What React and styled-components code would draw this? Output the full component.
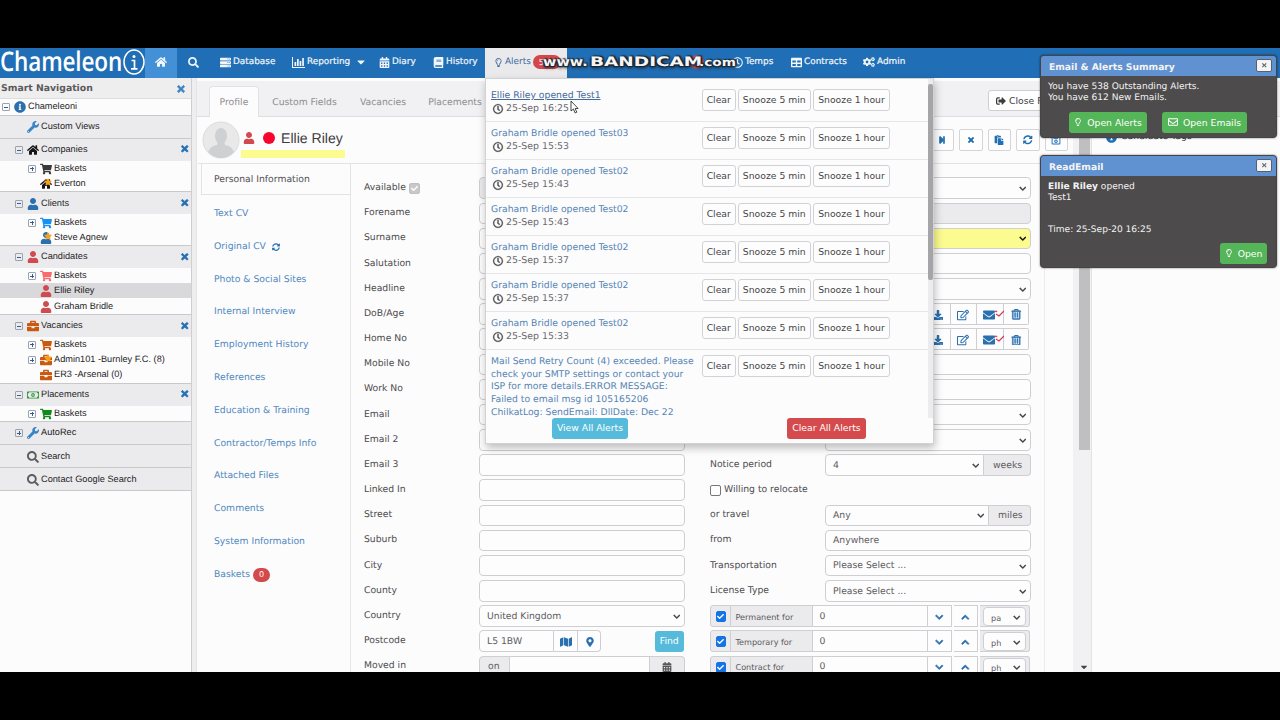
import React from "react";
import styled, { createGlobalStyle, css } from "styled-components";
import {
  FaHome, FaSearch, FaServer, FaCaretDown, FaCalendarAlt, FaBook, FaRegLightbulb, FaRegClock,
  FaTable, FaCogs, FaInfoCircle, FaWrench, FaShoppingCart, FaUser, FaBriefcase, FaRegMoneyBillAlt, FaStar,
  FaStepForward, FaTimes, FaPaste, FaRegSave, FaSignOutAlt, FaDownload, FaRegEdit, FaEnvelope,
  FaRegTrashAlt, FaMap, FaMapMarkerAlt, FaChevronDown, FaChevronUp, FaRegEnvelope, FaCheck, FaSyncAlt,
} from "react-icons/fa";

const Global = createGlobalStyle`
  * { box-sizing: border-box; }
  body { margin: 0; background: #000; overflow: hidden; }
`;
const verdana = `"DejaVu Sans", Verdana, sans-serif`;
const arial = `"Liberation Sans", Arial, sans-serif`;

const Page = styled.div`
  width: 1280px; height: 720px; padding: 48px 0; background: #000; overflow: hidden;
  font: 9.25px/12px ${verdana}; color: #4b4b4d; text-rendering: geometricPrecision; white-space: nowrap;
`;
const Frame = styled.div`
  position: relative; height: 624px; overflow: hidden; background: #fdfcfd; display: flex; flex-direction: column;
`;
const heavy = css`svg { stroke: currentColor; stroke-width: 45; overflow: visible; }`;

/* ---- top bar ---- */
const TopBar = styled.header`
  flex: none; height: 30px; background: #206eb5; color: #f1f6fb; display: flex; font-size: 8.9px;
`;
const Logo = styled.div`width: 145px; display: flex; align-items: center; color: #fff;`;
const LogoText = styled.span`
  flex: none; width: 121px; font: 600 27px/26px "Open Sans", sans-serif; letter-spacing: -0.2px;
  transform: translateY(-2px) scaleX(0.835); transform-origin: 0 50%;
`;
const LogoMark = styled.svg`flex: none; width: 24px; height: 28px; margin-left: 1px;`;
const MenuItem = styled.div`
  flex: none; width: ${(p) => p.$w}px; padding-left: ${(p) => p.$pl}px; display: flex; align-items: center; gap: 2px;
  padding-bottom: 2px; background: ${(p) => p.$bg || "transparent"}; color: ${(p) => p.$color || "inherit"};
  -webkit-text-stroke: ${(p) => (p.$color ? 0 : 0.2)}px;
  svg { font-size: ${(p) => p.$icon || 11}px; flex: none; }
`;
const Pill = styled.span`
  background: #d3474b; color: #fff; border-radius: 8px; height: 14px; width: ${(p) => p.$w || 18}px;
  display: inline-flex; align-items: center; padding-left: ${(p) => p.$pl || 6}px; font-size: 8.4px;
`;

const Body = styled.div`flex: 1; display: flex; min-height: 0;`;

/* ---- sidebar ---- */
const Side = styled.aside`
  flex: none; width: 192px; border-right: 1px solid #cfced1; background: #fdfcfd; font: 9.2px/12px ${arial}; color: #1d1d1f;
`;
const SideTitle = styled.div`
  height: 21px; background: #efeeef; display: flex; align-items: center; justify-content: space-between;
  padding: 2px 5px 0 1px; font: bold 9.3px/12px ${verdana}; color: #5a5a5d; border-bottom: 1px solid #dddcde;
  ${heavy}
  svg { color: #3d83c4; font-size: 10px; }
`;
const TreeRow = styled.div`
  display: flex; align-items: center; position: relative;
  height: ${(p) => (p.$kind === "group" ? 23.1 : p.$kind === "root" ? 15.6 : 15.25)}px;
  padding-left: ${(p) => (p.$kind === "group" ? 15 : p.$kind === "root" ? 2 : 28)}px;
  padding-right: 2px;
  padding-bottom: 1px;
  background: ${(p) => (p.$kind === "group" ? "#ebeaec" : "transparent")};
  border-top: ${(p) => (p.$kind === "group" ? "1px solid #c9c8cb" : "0")};
  ${(p) => p.$sel && css`background: #d9d8da;`}
  > b { margin-left: auto; color: #236fb2; display: flex; font-size: 9.5px; ${heavy} }
`;
const TreeEnd = styled.div`border-top: 1px solid #c9c8cb;`;
const Toggle = styled.span`
  width: 8px; height: 8px; margin-right: 3px; flex: none; border: 1px solid ${(p) => (p.$none ? "transparent" : "#9aa3b0")};
  border-radius: 1px; display: flex; align-items: center; justify-content: center; position: relative; top: 1px;
  &::before { content: ""; width: 4px; height: 1px; background: ${(p) => (p.$none ? "transparent" : "#3b5c8c")}; }
  &::after {
    content: ""; position: absolute; width: 1px; height: 4px; background: ${(p) => (p.$plus ? "#3b5c8c" : "transparent")};
  }
`;
const TreeIcon = styled.span`
  width: 13px; margin-right: 2px; display: flex; justify-content: center; color: ${(p) => p.$c}; position: relative; top: 1px;
  svg { font-size: 12px; }
  i { position: absolute; right: 0; top: 0; display: flex; color: #f5a01c; }
  i svg { font-size: 8px; }
`;

/* ---- main ---- */
const Main = styled.main`flex: none; width: 877px; margin-left: 4px; display: flex; flex-direction: column;
  border-left: 1px solid #e4e3e6; box-shadow: -4px 0 0 #eeedef;`;
const Tabs = styled.nav`
  flex: none; height: 36px; margin-top: 3px; background: #f1f0f2; border-bottom: 1px solid #dedde0; display: flex;
  align-items: flex-end; padding-left: 12px; color: #8e8d91; position: relative;
`;
const Tab = styled.div`
  height: ${(p) => (p.$on ? 31 : 30)}px; width: ${(p) => p.$w}px; padding-top: 11px; text-align: center;
  margin-bottom: ${(p) => (p.$on ? -1 : 0)}px;
  ${(p) => p.$on && css`background: #fdfcfd; border: 1px solid #e2e1e4; border-bottom: 0; border-radius: 4px 4px 0 0; padding-top: 10px;`}
`;
const CloseButton = styled.button`
  margin: 0 0 5px auto; height: 21px; width: 85px; border: 1px solid #cfced2; border-radius: 3px; background: #fefefe;
  font: inherit; color: #3c3c3e; display: flex; align-items: center; gap: 3px; padding: 0 7px; svg { font-size: 10px; }
`;
const NameRow = styled.div`
  flex: none; height: 47px; border-bottom: 1px solid #e3e2e5; display: flex; align-items: center; padding-left: 4px; margin-left: 1px;
`;
const Avatar = styled.svg`width: 38px; height: 38px; flex: none;`;
const NameTag = styled.div`
  width: 104px; height: 37px; margin: -1px 0 0 1px; border-bottom: 8px solid #fbfb90; display: flex; align-items: center;
  padding: 4px 0 0 2px; font: 14.1px/18px ${arial}; color: #3d3d40;
  svg { color: #d24a4e; font-size: 12px; }
`;
const Dot = styled.span`width: 12px; height: 12px; border-radius: 50%; background: #f6052d; margin: 0 6px 0 8px;`;
const Tools = styled.div`margin-left: auto; padding-right: 5px; display: flex; gap: 5px;`;
const Tool = styled.button`
  width: 23.5px; height: 22px; padding: 0; border: 1px solid #d5d4d8; border-radius: 2px; background: #fefefe; color: #2170b3;
  display: flex; align-items: center; justify-content: center; font-size: ${(p) => p.$s || 10}px;
  ${(p) => p.$heavy && heavy}
`;
const Columns = styled.div`flex: 1; display: flex; min-height: 0;`;
const Sections = styled.div`
  flex: none; width: 154px; border-right: 1px solid #e6e5e8; padding-left: 4px; color: #4f88bd;
`;
const Section = styled.div`
  height: 32.8px; padding: 2px 0 0 13px; display: flex; align-items: center; gap: 6px;
  svg { color: #236fb2; font-size: 8px; }
  ${(p) => p.$on && css`
    height: 31px; margin: 0 -1px 1.6px 0; border: 1px solid #e3e2e5; border-top: 0; color: #505053; background: #fdfcfd;
    padding: 2px 0 0 12px;
  `}
`;
const Count = styled.span`
  background: #d24a4b; color: #fff; height: 13.5px; width: 17px; margin-left: -3px; border-radius: 7px; font-size: 8px; display: flex;
  align-items: center; justify-content: center;
`;
const Form = styled.div`
  flex: none; width: 694px; padding: 11.5px 0 0 13px; border-right: 1px solid #ececee; display: flex; gap: 25px;
  overflow: hidden;
`;
const FormColumn = styled.div`width: 321px;`;
const Row = styled.div`height: 25.18px; display: flex; align-items: center;`;
const Label = styled.label`
  flex: none; width: 115px; display: flex; align-items: center; gap: 3px;
`;
const Box = styled.div`
  width: ${(p) => (p.$w ? p.$w + "px" : "auto")}; flex: ${(p) => (p.$w ? "none" : 1)}; height: ${(p) => p.$h || 21.5}px;
  border: 1px solid #cfced2; border-radius: ${(p) => p.$r || "4px"}; background: ${(p) => p.$bg || "#fefdfe"};
  padding: 1.5px ${(p) => p.$pr || 4}px 0 ${(p) => p.$pl || 7}px; display: flex; align-items: center; justify-content: space-between;
  margin-right: ${(p) => p.$mr || 0}px; color: ${(p) => p.$color || "#5c5c60"};
  font-size: ${(p) => p.$fs || 9.25}px;
  & + & { border-left-width: ${(p) => (p.$keep ? 1 : 0)}px; }
  svg { color: ${(p) => p.$ic || "#39393b"}; flex: none; }
  ${(p) => p.$heavy && heavy}
`;
const Check = styled.span`
  width: 11px; height: 11px; border-radius: 2px; border: 1px solid ${(p) => p.$line}; background: ${(p) => p.$bg};
  color: #fff; display: flex; align-items: center; justify-content: center; font-size: 7px; svg { color: #fff !important; }
`;
const Find = styled.button`
  margin-left: auto; width: 29.5px; height: 21px; padding: 0; border: 0; border-radius: 3px; background: #56bbdb; color: #fff; font: inherit;
  margin-right: 1px;
`;

const ScrollTrack = styled.div`
  flex: none; width: 18px; background: #f1f0f2; display: flex; flex-direction: column; align-items: center;
  justify-content: space-between; padding-left: 4px;
`;
const ScrollThumb = styled.div`width: 11px; height: 372px; background: #bfbec1;`;
const Rail = styled.section`flex: 1; border-left: 1px solid #e3e2e5; color: #333;`;
const RailBar = styled.div`height: 36px; margin-top: 3px; background: #f1f0f2; border-bottom: 1px solid #dedde0;`;
const RailTitle = styled.div`
  padding: 14px 0 0 14px; display: flex; align-items: center; gap: 4px; svg { color: #2170b3; font-size: 11px; }
`;

/* ---- alerts menu ---- */
const AlertMenu = styled.div`
  position: absolute; left: 485px; top: 30px; width: 449px; height: 366px; background: #fdfcfd; border: 1px solid #d2d1d4;
  box-shadow: 1px 4px 8px rgba(0, 0, 0, 0.25); display: flex; flex-direction: column;
`;
const AlertScroll = styled.div`height: 339px; display: flex; overflow: hidden;`;
const AlertList = styled.div`flex: 1; padding-top: 4.5px;`;
const AlertItem = styled.div`
  height: 38px; padding: 6.5px 0 0 5px; border-bottom: 1px solid #e6e5e8; display: flex;
  &:last-child { border-bottom: 0; }
`;
const AlertText = styled.div`
  flex: none; width: 205px; margin-right: 6px; line-height: 12.7px; white-space: normal; color: #5484b4;
  ${(p) => p.$hover && css`a { color: #41699a; text-decoration: underline; }`}
`;
const AlertTime = styled.div`
  color: #69696d; display: flex; align-items: center; gap: 3px; padding-left: 2px; height: 12.5px; font-size: 9.4px;
  svg { font-size: 10px; color: #4d4d50; stroke: currentColor; stroke-width: 18; overflow: visible; }
`;
const Small = styled.button`
  flex: none; width: ${(p) => p.$w}px; height: 21.5px; margin-right: 2.5px; padding: 1px 0 0; border: 1px solid #d2d1d5;
  border-radius: 3px; background: #fefdfe; font: inherit; color: #454548; margin-top: -1px;
`;
const AlertThumb = styled.div`
  width: 5px; height: 340px; background: #ececee; padding-top: 5px;
  &::before { content: ""; display: block; height: 196px; background: #a5a4a7; border-radius: 2px; }
`;
const AlertFooter = styled.div`display: flex; justify-content: space-between; padding: 0 67px 0 66px;`;
const Action = styled.button`
  width: ${(p) => p.$w}px; height: 20.5px; padding: 0; border: 0; border-radius: 3px; background: ${(p) => p.$bg}; color: #fff;
  font: inherit; display: flex; align-items: center; justify-content: center; gap: 5px; font-size: 9.25px;
`;

/* ---- notifications ---- */
const Toast = styled.div`
  position: absolute; left: 1040px; top: ${(p) => p.$top}px; width: 237px; height: ${(p) => p.$h}px; border-radius: 4px;
  background: #4d4b4c; color: #f3f3f3; font-size: 9.05px; line-height: 11.5px; overflow: hidden; border: 1px solid #454446;
  box-shadow: 0 0 2px rgba(0, 0, 0, 0.6);
`;
const ToastHead = styled.div`
  height: 20px; background: #6092d2; display: flex; justify-content: space-between; padding: 3px 4px 0 8px;
  font-weight: bold; font-size: 9.2px; line-height: 17px;
`;
const ToastClose = styled.span`
  width: 16px; height: 13px; border-radius: 2px; background: #f4f3f5; border: 1px solid #56616f; color: #666; display: flex;
  align-items: center; justify-content: center; font-size: 6.5px;
`;
const ToastBody = styled.div`padding: 5.5px 0 0 7px;`;
const ToastActions = styled.div`
  display: flex; gap: 15px; padding: ${(p) => p.$p};
`;

const Watermark = styled.div`
  position: absolute; left: 543px; top: 6px; color: #f5f5f5; font: bold 13px/16px ${verdana}; display: flex; align-items: baseline;
  text-shadow: 1px 1px 1px #1c2530, -1px 1px 1px #1c2530, 1px -1px 1px #1c2530, 0 2px 3px #1c2530;
`;
const Stretch = styled.span`
  width: ${(p) => p.$w}px; font-size: ${(p) => p.$s}px; transform: scaleX(${(p) => p.$x}); transform-origin: 0 50%;
`;
const Pointer = styled.svg`position: absolute; left: 570px; top: 52px; width: 9px; height: 14px;`;

const BarChart = () => (
  <svg width="13" height="11" viewBox="0 0 13 11" fill="currentColor">
    <path d="M0 0h1v10h12v1H0zM2.5 5h1.7v4H2.5zM5 2h1.7v7H5zM7.6 4h1.7v5H7.6zM10.2 1h1.7v8h-1.7z" />
  </svg>
);
const Starred = ({ icon }) => (<>{icon}<i><FaStar /></i></>);
const blue = "#2a70ae", red = "#d04b50", orange = "#c9590f";
const tree = [
  ["none", "#3a83c6", <FaWrench />, "Custom Views"],
  ["-", "#151515", <FaHome />, "Companies", true, [
    ["+", "#3a3a3a", <FaShoppingCart />, "Baskets"], ["none", "#151515", <Starred icon={<FaHome />} />, "Everton"]]],
  ["-", blue, <FaUser />, "Clients", true, [
    ["+", "#1790f5", <FaShoppingCart />, "Baskets"], ["none", blue, <Starred icon={<FaUser />} />, "Steve Agnew"]]],
  ["-", red, <FaUser />, "Candidates", true, [
    ["+", "#fa6b70", <FaShoppingCart />, "Baskets"], ["none", red, <FaUser />, "Ellie Riley", true], ["none", red, <FaUser />, "Graham Bridle"]]],
  ["-", orange, <FaBriefcase />, "Vacancies", true, [
    ["+", orange, <FaShoppingCart />, "Baskets"], ["+", orange, <Starred icon={<FaBriefcase />} />, "Admin101 -Burnley F.C. (8)"],
    ["none", orange, <FaBriefcase />, "ER3 -Arsenal (0)"]]],
  ["-", "#2d9a3c", <FaRegMoneyBillAlt />, "Placements", true, [["+", "#108a18", <FaShoppingCart />, "Baskets"]]],
  ["+", "#3a83c6", <FaWrench />, "AutoRec"],
  ["none", "#5e5e61", <FaSearch />, "Search"],
  ["none", "#5e5e61", <FaSearch />, "Contact Google Search"],
];
const TreeLine = ({ kind, toggle, color, icon, text, sel, close }) => (
  <TreeRow $kind={kind} $sel={sel}>
    <Toggle $none={toggle === "none"} $plus={toggle === "+"} />
    <TreeIcon $c={color}>{icon}</TreeIcon>{text}{close && <b><FaTimes /></b>}
  </TreeRow>
);

const Arrow = () => <FaChevronDown size={7.5} stroke="currentColor" strokeWidth={25} />;
const Select = ({ text = "", ...p }) => <Box {...p}>{text || <span />}<Arrow /></Box>;
const FieldRow = ({ label, children }) => <Row><Label>{label}</Label>{children}</Row>;
const PhoneTools = () => (
  <>
    <Box $w={101} $r="4px 0 0 4px" />
    <Box $w={25} $r="0" $pl={7} $ic={blue}><FaDownload size={10} /></Box>
    <Box $w={26} $r="0" $pl={6} $ic={blue}><FaRegEdit size={12} /></Box>
    <Box $w={27} $r="0" $pl={6} $ic={blue}><FaEnvelope size={12} />
      <svg width="11" height="10" viewBox="0 0 11 10"><path d="M0 2q1-2 2 0M1 4l3 2 5-5" fill="none" stroke="#e0364a" strokeWidth="1.2" /></svg>
    </Box>
    <Box $w={25} $r="0 2px 2px 0" $pl={7} $ic={blue}><FaRegTrashAlt size={10.5} stroke="currentColor" strokeWidth={22} /></Box>
  </>
);
const RateRow = ({ label, unit }) => (
  <Row>
    <Box $w={20.5} $r="3px 0 0 3px" $bg="#ebeaec" $pl={5}><Check $bg="#1274e6" $line="#1274e6"><FaCheck /></Check></Box>
    <Box $w={82} $r="0" $bg="#ebeaec" $pl={5} $fs={8.1}>{label}</Box>
    <Box $w={115.5} $r="0">0</Box>
    <Box $w={24} $r="0" $pl={7} $mr={1.5} $ic={blue} $heavy><FaChevronDown size={8.5} /></Box>
    <Box $w={24.5} $r="0" $pl={7} $mr={2} $keep $ic={blue} $heavy><FaChevronUp size={8.5} /></Box>
    <Box $w={50} $r="0 3px 3px 0" $bg="#ebeaec" $pl={3} $pr={3} $keep>
      <Box $w={42.5} $h={19} $fs={8.1}>{unit}<Arrow /></Box>
    </Box>
  </Row>
);

const alerts = [
  ["Ellie Riley opened Test1", "16:25"], ["Graham Bridle opened Test03", "15:53"], ["Graham Bridle opened Test02", "15:43"],
  ["Graham Bridle opened Test02", "15:43"], ["Graham Bridle opened Test02", "15:37"], ["Graham Bridle opened Test02", "15:37"],
  ["Graham Bridle opened Test02", "15:33"],
  ["Mail Send Retry Count (4) exceeded. Please check your SMTP settings or contact your ISP for more details.ERROR MESSAGE: Failed to email msg id 105165206 ChilkatLog: SendEmail: DllDate: Dec 22"],
];
const sections = ["Text CV", "Original CV", "Photo & Social Sites", "Internal Interview", "Employment History", "References",
  "Education & Training", "Contractor/Temps Info", "Attached Files", "Comments", "System Information", "Baskets"];

export default function App() {
  return (
    <Page>
      <Global />
      <Frame>
        <TopBar>
          <Logo>
            <LogoText>Chameleon</LogoText>
            <LogoMark viewBox="0 0 24 28">
              <ellipse cx="12" cy="13" rx="10" ry="12" fill="none" stroke="#fff" strokeWidth="1.5" />
              <circle cx="12" cy="7.5" r="1.5" fill="#fff" /><path d="M9.5 11.5h3v8M9 19.8h6.5" fill="none" stroke="#fff" strokeWidth="1.7" />
            </LogoMark>
          </Logo>
          <MenuItem $w={32} $pl={10} $bg="#4490d6" $icon={12}><FaHome /></MenuItem>
          <MenuItem $w={43} $pl={11}><FaSearch /></MenuItem>
          <MenuItem $w={72} $pl={0}><FaServer /> Database</MenuItem>
          <MenuItem $w={87} $pl={0} $icon={12}><BarChart /> Reporting&nbsp;<FaCaretDown /></MenuItem>
          <MenuItem $w={54} $pl={0}><FaCalendarAlt /> Diary</MenuItem>
          <MenuItem $w={52} $pl={0}><FaBook /> History</MenuItem>
          <MenuItem $w={82} $pl={9} $bg="#eae9ec" $color="#41699f" $icon={9}><FaRegLightbulb />Alerts<Pill $w={28}>5</Pill></MenuItem>
          <MenuItem $w={165} $pl={123}><Pill $w={14} $pl={4}>2</Pill></MenuItem>
          <MenuItem $w={59} $pl={0}><FaRegClock /> Temps</MenuItem>
          <MenuItem $w={72} $pl={0}><FaTable /> Contracts</MenuItem>
          <MenuItem $w={60} $pl={0} $icon={12}><FaCogs /> Admin</MenuItem>
        </TopBar>
        <Body>
          <Side>
            <SideTitle>Smart Navigation<FaTimes /></SideTitle>
            <TreeLine kind="root" toggle="-" color={blue} icon={<FaInfoCircle />} text="Chameleoni" />
            {tree.map(([toggle, color, icon, text, close, kids]) => (
              <React.Fragment key={text}>
                <TreeLine kind="group" {...{ toggle, color, icon, text, close }} />
                {kids && kids.map(([t, c, i, label, sel]) => (
                  <TreeLine key={label} kind="leaf" toggle={t} color={c} icon={i} text={label} sel={sel} />
                ))}
              </React.Fragment>
            ))}
            <TreeEnd />
          </Side>
          <Main>
            <Tabs>
              <Tab $on $w={50}>Profile</Tab><Tab $w={91}>Custom Fields</Tab><Tab $w={66}>Vacancies</Tab><Tab $w={78}>Placements</Tab>
              <CloseButton><FaSignOutAlt />Close Form</CloseButton>
            </Tabs>
            <NameRow>
              <Avatar viewBox="0 0 38 38">
                <circle cx="19" cy="19" r="18" fill="#e9e9e9" stroke="#dcdcdd" />
                <ellipse cx="19" cy="15" rx="6" ry="8" fill="#cfd0d1" /><path d="M6 31q2-6 9-7l1-4h6l1 4q7 1 9 7-6 6-13 6t-13-6z" fill="#cfd0d1" />
              </Avatar>
              <NameTag><FaUser /><Dot />Ellie Riley</NameTag>
              <Tools>
                <Tool $s={8} $heavy><FaStepForward /></Tool><Tool $s={8} $heavy><FaTimes /></Tool><Tool><FaPaste /></Tool>
                <Tool $s={9.5}><FaSyncAlt /></Tool><Tool><FaRegSave /></Tool>
              </Tools>
            </NameRow>
            <Columns>
              <Sections>
                <Section $on>Personal Information</Section>
                {sections.map((s) => (
                  <Section key={s}>{s}{s === "Original CV" && <FaSyncAlt />}{s === "Baskets" && <Count>0</Count>}</Section>
                ))}
              </Sections>
              <Form>
                <FormColumn>
                  <FieldRow label={<>Available <Check $bg="#c9c8cb" $line="#c0bfc2"><FaCheck /></Check></>}><Box $bg="#ebeaec" /></FieldRow>
                  {["Forename", "Surname", "Salutation", "Headline", "DoB/Age", "Home No", "Mobile No", "Work No", "Email", "Email 2",
                    "Email 3", "Linked In", "Street", "Suburb", "City", "County"].map((l) => (
                    <FieldRow key={l} label={l}><Box /></FieldRow>
                  ))}
                  <FieldRow label="Country"><Select text="United Kingdom" /></FieldRow>
                  <FieldRow label="Postcode">
                    <Box $w={75} $r="4px 0 0 4px">L5 1BW</Box>
                    <Box $w={24} $r="0" $pl={6} $ic={blue}><FaMap size={12} /></Box>
                    <Box $w={22.5} $r="0 4px 4px 0" $ic={blue}><FaMapMarkerAlt size={10} /></Box>
                    <Find>Find</Find>
                  </FieldRow>
                  <FieldRow label="Moved in">
                    <Box $w={31} $r="4px 0 0 4px" $bg="#ebeaec" $pl={8}>on</Box><Box $r="0" />
                    <Box $w={35} $r="0 4px 4px 0" $bg="#ebeaec" $pl={12} $ic="#555"><FaCalendarAlt size={10} /></Box>
                  </FieldRow>
                </FormColumn>
                <FormColumn>
                  <FieldRow><Select /></FieldRow>
                  <FieldRow><Box $bg="#ebeaec" /></FieldRow>
                  <FieldRow><Select $bg="#fbfb90" $ic="#000" /></FieldRow>
                  <FieldRow><Box /></FieldRow>
                  <FieldRow><Select /></FieldRow>
                  <FieldRow><PhoneTools /></FieldRow>
                  <FieldRow><PhoneTools /></FieldRow>
                  <FieldRow><Box /></FieldRow>
                  <FieldRow><Box /></FieldRow>
                  <FieldRow><Select /></FieldRow>
                  <FieldRow><Select /></FieldRow>
                  <FieldRow label="Notice period"><Select text="4" $w={159} $r="4px 0 0 4px" /><Box $r="0 4px 4px 0" $bg="#ebeaec" $pl={9}>weeks</Box></FieldRow>
                  <Row><Label><Check $bg="#fff" $line="#77767a" />Willing to relocate</Label></Row>
                  <FieldRow label="or travel"><Select text="Any" $w={164} $r="4px 0 0 4px" /><Box $r="0 4px 4px 0" $bg="#ebeaec" $pl={9}>miles</Box></FieldRow>
                  <FieldRow label="from"><Box>Anywhere</Box></FieldRow>
                  <FieldRow label="Transportation"><Select text="Please Select ..." /></FieldRow>
                  <FieldRow label="License Type"><Select text="Please Select ..." /></FieldRow>
                  <RateRow label="Permanent for" unit="pa" /><RateRow label="Temporary for" unit="ph" /><RateRow label="Contract for" unit="ph" />
                </FormColumn>
              </Form>
            </Columns>
          </Main>
          <ScrollTrack><ScrollThumb /><FaCaretDown size={10} color="#444" /></ScrollTrack>
          <Rail><RailBar /><RailTitle><FaInfoCircle />Candidate Tags</RailTitle></Rail>
        </Body>

        <AlertMenu>
          <AlertScroll>
            <AlertList>
              {alerts.map(([text, time], i) => (
                <AlertItem key={i}>
                  <AlertText $hover={i === 0}><a>{text}</a>{time && <AlertTime><FaRegClock />25-Sep {time}</AlertTime>}</AlertText>
                  <Small $w={33.5}>Clear</Small><Small $w={72.5}>Snooze 5 min</Small><Small $w={77}>Snooze 1 hour</Small>
                </AlertItem>
              ))}
            </AlertList>
            <AlertThumb />
          </AlertScroll>
          <AlertFooter><Action $w={76} $bg="#56bbdb">View All Alerts</Action><Action $w={79} $bg="#d54a4c">Clear All Alerts</Action></AlertFooter>
        </AlertMenu>

        <Toast $top={7} $h={83}>
          <ToastHead>Email &amp; Alerts Summary<ToastClose><FaTimes /></ToastClose></ToastHead>
          <ToastBody>You have 538 Outstanding Alerts.<br />You have 612 New Emails.
            <ToastActions $p="7.5px 0 0 21px">
              <Action $w={78} $bg="#55b559"><FaRegLightbulb size={8} />Open Alerts</Action>
              <Action $w={85} $bg="#55b559"><FaRegEnvelope size={10} />Open Emails</Action>
            </ToastActions>
          </ToastBody>
        </Toast>
        <Toast $top={107} $h={113}>
          <ToastHead>ReadEmail<ToastClose><FaTimes /></ToastClose></ToastHead>
          <ToastBody><b>Ellie Riley</b> opened<br />Test1
            <ToastActions $p="20px 0 0 0">Time: 25-Sep-20 16:25</ToastActions>
            <ToastActions $p="7px 0 0 172px"><Action $w={47} $bg="#55b559"><FaRegLightbulb size={8} />Open</Action></ToastActions>
          </ToastBody>
        </Toast>

        <Watermark><Stretch $w={46.5} $s={12.5} $x={1.16}>www.</Stretch><Stretch $w={109} $s={13} $x={1.42}>BANDICAM</Stretch><Stretch $w={40} $s={11} $x={1.24}>.com</Stretch></Watermark>
        <Pointer viewBox="0 0 9 14"><path d="M1 1v10l2.4-2 1.7 4 1.7-.8-1.7-3.7h3z" fill="#fff" stroke="#333" strokeWidth=".9" /></Pointer>
      </Frame>
    </Page>
  );
}
